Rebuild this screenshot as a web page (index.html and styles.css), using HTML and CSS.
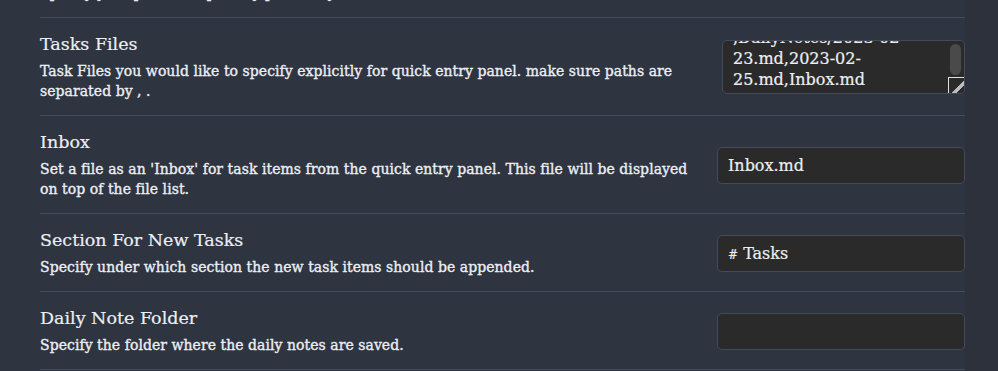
FILE: index.html
```html
<!DOCTYPE html>
<html>
<head>
<meta charset="utf-8">
<link rel="stylesheet" href="styles.css">
</head>
<body>
<div class="page">
  <div class="settings">
    <div class="setting-item prev">
      <div class="setting-info">
        <div class="setting-desc">Specify your preferred priority picker layout.</div>
      </div>
    </div>
    <div class="setting-item">
      <div class="setting-info">
        <div class="setting-name">Tasks Files</div>
        <div class="setting-desc">Task Files you would like to specify explicitly for quick entry panel. make sure paths are separated by , .</div>
      </div>
      <div class="setting-control">
        <div class="textarea">
          <div class="textarea-text">Tasks.md,Projects.md,<br>,DailyNotes/2023-02-<br>23.md,2023-02-<br>25.md,Inbox.md</div>
          <div class="scroll-thumb"></div>
          <div class="resize-grip"></div>
        </div>
      </div>
    </div>
    <div class="setting-item">
      <div class="setting-info">
        <div class="setting-name">Inbox</div>
        <div class="setting-desc">Set a file as an 'Inbox' for task items from the quick entry panel. This file will be displayed on top of the file list.</div>
      </div>
      <div class="setting-control">
        <div class="input">Inbox.md</div>
      </div>
    </div>
    <div class="setting-item">
      <div class="setting-info">
        <div class="setting-name">Section For New Tasks</div>
        <div class="setting-desc">Specify under which section the new task items should be appended.</div>
      </div>
      <div class="setting-control">
        <div class="input"><span class="hash">#</span> Tasks</div>
      </div>
    </div>
    <div class="setting-item">
      <div class="setting-info">
        <div class="setting-name">Daily Note Folder</div>
        <div class="setting-desc">Specify the folder where the daily notes are saved.</div>
      </div>
      <div class="setting-control">
        <div class="input"></div>
      </div>
    </div>
    <div class="setting-item last"></div>
  </div>
</div>
</body>
</html>
```
FILE: styles.css
```css
html, body {
  margin: 0;
  padding: 0;
  background: #2c313c;
  height: 371px;
  overflow: hidden;
}
.page {
  font-family: "DejaVu Serif", serif;
  color: #eceff4;
  width: 965px;
  background: #2e3440;
  height: 371px;
  overflow: hidden;
}
.settings {
  margin-left: 40px;
  margin-top: -17px;
}
.setting-item {
  display: flex;
  align-items: center;
  border-top: 1px solid #454c5c;
  padding: 15px 0 14px;
}
.setting-item.prev {
  border-top: none;
  padding: 0 0 14px;
}
.setting-item.last {
  padding: 0;
}
.setting-info {
  flex: 1 1 auto;
  margin-right: 14px;
}
.setting-name {
  font-size: 17.5px;
  line-height: 22px;
  -webkit-text-stroke: 0.2px #eceff4;
}
.setting-desc {
  font-size: 14px;
  line-height: 20px;
  margin-top: 6px;
  letter-spacing: 0.05px;
  -webkit-text-stroke: 0.35px #eceff4;
}
.prev .setting-desc {
  margin-top: 0;
}
.setting-control {
  flex: 0 0 248px;
  display: flex;
  justify-content: flex-end;
}
.input {
  box-sizing: border-box;
  width: 248px;
  height: 37px;
  background: #2a2a2a;
  border: 1px solid #434a5a;
  border-radius: 5px;
  padding: 0 10px;
  font-size: 16px;
  line-height: 35px;
  -webkit-text-stroke: 0.2px #eceff4;
}
.hash {
  font-size: 12px;
}
.textarea {
  position: relative;
  box-sizing: border-box;
  width: 243px;
  height: 54px;
  background: #2a2a2a;
  border: 1px solid #434a5a;
  border-radius: 5px;
  padding: 0 24px 3px 10px;
  display: flex;
  flex-direction: column;
  justify-content: flex-end;
  overflow: hidden;
  font-size: 16px;
  line-height: 21px;
  -webkit-text-stroke: 0.2px #eceff4;
}
.textarea-text {
  white-space: nowrap;
}
.scroll-thumb {
  position: absolute;
  top: 3px;
  right: 3px;
  width: 11px;
  height: 31px;
  border-radius: 6px;
  background: #4a4a4a;
}
.resize-grip {
  position: absolute;
  right: 0;
  bottom: 0;
  width: 15px;
  height: 15px;
  border-left: 1px solid #e0e0e0;
  border-top: 1px solid #e0e0e0;
  background: #2a2a2a linear-gradient(135deg, transparent 58%, #bbb 58%, #bbb 74%, transparent 74%);
}
```
